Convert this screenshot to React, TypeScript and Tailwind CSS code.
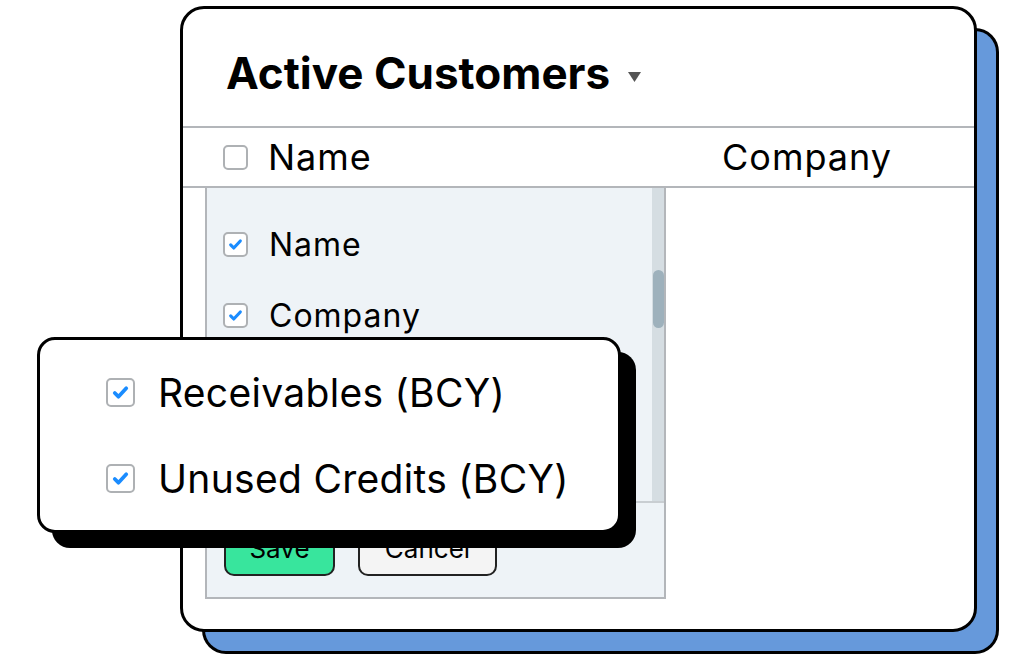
import React from 'react';

function Check({ size }: { size: number }) {
  return (
    <svg width={size} height={size} viewBox="0 0 24 24" fill="none">
      <path d="M6.5 12.5l3.5 3.5 7.5-8" stroke="#1a8cff" strokeWidth="3.6" strokeLinecap="round" strokeLinejoin="round" />
    </svg>
  );
}

function Box({ checked, big }: { checked?: boolean; big?: boolean }) {
  return (
    <div
      className={
        big
          ? 'flex h-[29px] w-[29px] shrink-0 items-center justify-center rounded-[5px] border-2 border-[#aeb1b4] bg-white'
          : 'flex h-[25px] w-[25px] shrink-0 items-center justify-center rounded-[5px] border-2 border-[#aeb1b4] bg-white'
      }
    >
      {checked && <Check size={big ? 25 : 21} />}
    </div>
  );
}

// rows further down the list sit under the floating card
const fields = ['Name', 'Company'];

export default function App() {
  return (
    <div className="relative h-[660px] w-[1036px] overflow-hidden bg-white font-['Inter',sans-serif] text-black">
      <div className="pl-[180px] pt-[6px]">
        <div className="flex h-[626px] w-[797px] flex-col overflow-hidden rounded-[24px] border-[3px] border-black bg-white shadow-[22px_22px_0_-3px_#6699db,22px_22px_0_0_#000]">
          {/* title */}
          <div className="flex h-[117px] shrink-0 items-center pl-[43px] pt-[10px]">
            <h1 className="text-[44px] font-bold leading-none">Active Customers</h1>
            <svg width="13" height="10" viewBox="0 0 13 10" className="ml-[18px] mt-[8px]">
              <path d="M0 0h13L6.5 10z" fill="#555" />
            </svg>
          </div>

          {/* column header */}
          <div className="flex h-[62px] shrink-0 items-center border-y-2 border-[#b3b6ba] pl-[40px]">
            <Box />
            <span className="ml-[20px] w-[454px] text-[36px] leading-none tracking-[1px]">Name</span>
            <span className="text-[36px] leading-none tracking-[1px]">Company</span>
          </div>

          {/* customize columns panel */}
          <div className="ml-[22px] flex h-[411px] w-[461px] flex-col border-2 border-t-0 border-[#b3b6ba] bg-[#eef3f7]">
            <div className="flex h-[315px] overflow-hidden border-b-2 border-[#c9ced2]">
              <div className="flex flex-1 flex-col gap-[46px] pl-[16px] pt-[44px]">
                {fields.map((f) => (
                  <div key={f} className="flex h-[25px] items-center gap-[21px]">
                    <Box checked />
                    <span className="text-[32px] leading-none tracking-[1px]">{f}</span>
                  </div>
                ))}
              </div>
              <div className="w-[12px] bg-[#d5dde2] pt-[82px]">
                <div className="ml-[1px] h-[58px] w-[11px] rounded-full bg-[#9eb1bc]" />
              </div>
            </div>
            <div className="flex gap-[23px] pl-[17px] pt-[17px]">
              <button className="h-[56px] w-[111px] rounded-[10px] border-2 border-[#222] bg-[#38e59d] text-[26px]">
                Save
              </button>
              <button className="h-[56px] w-[139px] rounded-[10px] border-2 border-[#222] bg-[#f4f4f4] text-[26px]">
                Cancel
              </button>
            </div>
          </div>
        </div>
      </div>

      {/* floating popup */}
      <div className="absolute left-[37px] top-[337px] flex h-[196px] w-[584px] flex-col justify-center gap-[57px] rounded-[18px] border-[3px] border-black bg-white pl-[66px] shadow-[15px_15px_0_0_#000]">
        <div className="flex h-[29px] items-center gap-[23px]">
          <Box checked big />
          <span className="text-[39px] leading-none tracking-[0.3px]">Receivables (BCY)</span>
        </div>
        <div className="flex h-[29px] items-center gap-[23px]">
          <Box checked big />
          <span className="text-[39px] leading-none tracking-[0.3px]">Unused Credits (BCY)</span>
        </div>
      </div>
    </div>
  );
}
